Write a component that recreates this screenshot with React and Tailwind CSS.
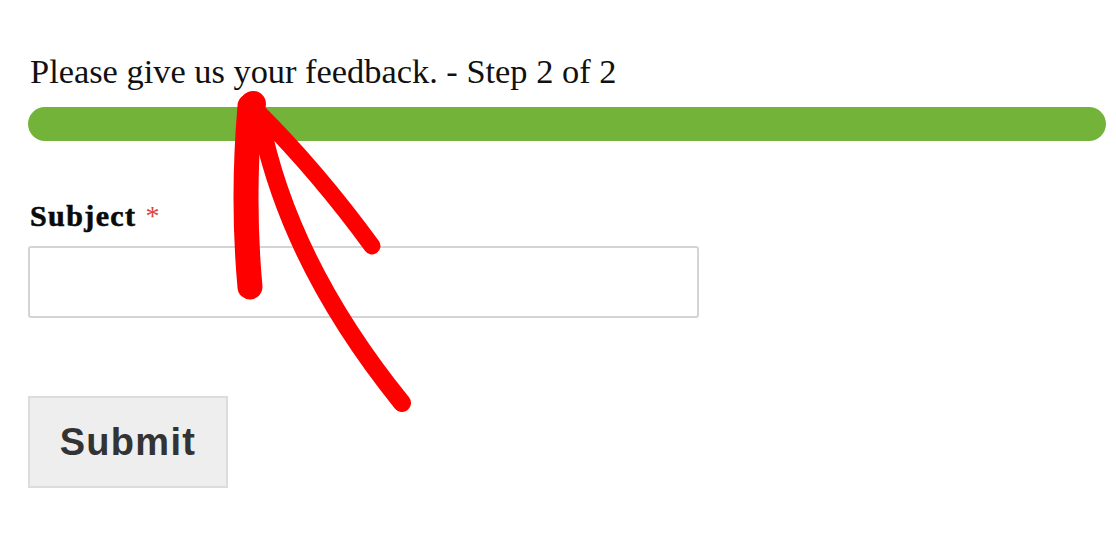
import React from "react";

export default function App() {
  return (
    <div className="relative w-[1116px] h-[542px] bg-white overflow-hidden">
      <div className="pl-[28px] pr-[10px] pt-[51px] flex flex-col">
        <div
          className="pl-[2px] text-[34.4px] leading-[40px] text-[#111] h-[40px] whitespace-nowrap"
          style={{ fontFamily: '"Liberation Serif", serif' }}
        >
          Please give us your feedback. - Step 2 of 2
        </div>
        <div className="mt-[16px] h-[34px] w-[1078px] rounded-full bg-[#74b33a]" />
        <div
          className="mt-[57px] pl-[2px] h-[36px] text-[30px] leading-[36px] font-bold tracking-[1.4px] text-[#0a0a0a] whitespace-nowrap [-webkit-text-stroke:0.6px_#0a0a0a]"
          style={{ fontFamily: '"Liberation Serif", serif' }}
        >
          Subject{" "}
          <span className="text-[#e0413a] font-normal text-[28px] align-top [-webkit-text-stroke:0px]">*</span>
        </div>
        <div className="mt-[12px] w-[671px] h-[72px] border-2 border-[#d4d4d4] rounded-[3px] bg-white" />
        <div className="mt-[78px] w-[200px] h-[92px] border-2 border-[#dcdcdc] bg-[#eeeeee] flex items-center justify-center">
          <span
            className="text-[38px] font-bold tracking-[1.3px] text-[#333333] leading-none"
            style={{ fontFamily: '"Liberation Sans", Arial, sans-serif' }}
          >
            Submit
          </span>
        </div>
      </div>
      <svg
        className="absolute left-0 top-0 pointer-events-none"
        width="1116"
        height="542"
        viewBox="0 0 1116 542"
      >
        <g fill="none" stroke="#ff0000" strokeLinecap="round" strokeLinejoin="round">
          <path d="M250 106 Q242 200 250 287" strokeWidth="25" />
          <path d="M258 112 Q318 172 372 246" strokeWidth="17" />
          <path d="M260 118 Q288 262 402 403" strokeWidth="18" />
        </g>
        <circle cx="253" cy="104" r="13" fill="#ff0000" />
      </svg>
    </div>
  );
}
